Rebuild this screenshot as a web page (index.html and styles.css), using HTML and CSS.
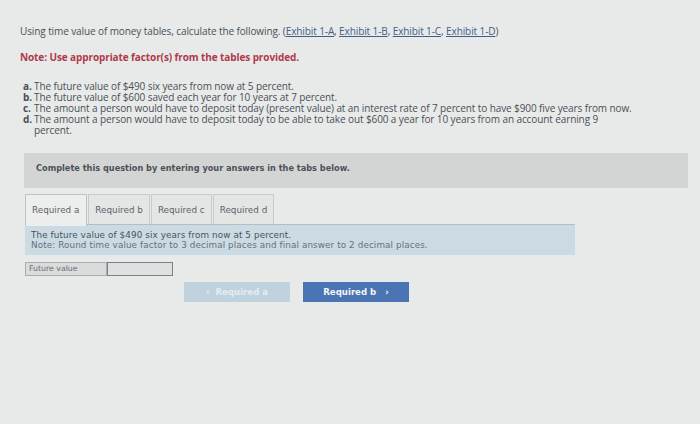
FILE: index.html
```html
<!DOCTYPE html>
<html>
<head>
<meta charset="utf-8">
<link rel="stylesheet" href="styles.css">
</head>
<body>
<div class="page">
  <p class="intro">Using time value of money tables, calculate the following. (<a href="#">Exhibit 1-A</a>, <a href="#">Exhibit 1-B</a>, <a href="#">Exhibit 1-C</a>, <a href="#">Exhibit 1-D</a>)</p>
  <p class="note">Note: Use appropriate factor(s) from the tables provided.</p>
  <ol class="items">
    <li><span class="m">a.</span><span>The future value of $490 six years from now at 5 percent.</span></li>
    <li><span class="m">b.</span><span>The future value of $600 saved each year for 10 years at 7 percent.</span></li>
    <li><span class="m">c.</span><span>The amount a person would have to deposit today (present value) at an interest rate of 7 percent to have $900 five years from now.</span></li>
    <li><span class="m">d.</span><span>The amount a person would have to deposit today to be able to take out $600 a year for 10 years from an account earning 9 percent.</span></li>
  </ol>
  <div class="complete">Complete this question by entering your answers in the tabs below.</div>
  <div class="tabs">
    <div class="tab active">Required a</div>
    <div class="tab">Required b</div>
    <div class="tab">Required c</div>
    <div class="tab">Required d</div>
  </div>
  <div class="panel">
    <div>The future value of $490 six years from now at 5 percent.</div>
    <div class="rnote">Note: Round time value factor to 3 decimal places and final answer to 2 decimal places.</div>
  </div>
  <div class="answer">
    <div class="label">Future value</div>
    <div class="input"></div>
  </div>
  <div class="nav">
    <div class="btn prev">&lsaquo;&nbsp;&nbsp;Required a</div>
    <div class="btn next">Required b&nbsp;&nbsp;&nbsp;&rsaquo;</div>
  </div>
</div>
</body>
</html>
```
FILE: styles.css
```css
html, body {
  margin: 0;
  padding: 0;
  background: #e7eae9;
}
.page {
  width: 700px;
  height: 424px;
  overflow: hidden;
  padding: 25px 12px 0 20px;
  box-sizing: border-box;
  font-family: "Open Sans", "Liberation Sans", sans-serif;
  color: #4a4f57;
  font-size: 10px;
}
p { margin: 0; }
.intro {
  letter-spacing: -0.1px;
  line-height: 12px;
}
.intro a {
  color: #3f5e8c;
  text-decoration: underline;
}
.note {
  margin-top: 14px;
  color: #b03a4c;
  font-weight: 700;
  line-height: 12px;
  letter-spacing: -0.1px;
}
.items {
  list-style: none;
  margin: 17.5px 0 0 0;
  padding: 0 0 0 3px;
  line-height: 11px;
  letter-spacing: -0.1px;
  width: 614px;
}
.items li {
  display: flex;
}
.items .m {
  font-weight: 700;
  width: 11px;
  flex: none;
}
.complete {
  margin: 17.5px 0 0 4px;
  width: 664px;
  height: 35px;
  box-sizing: border-box;
  background: #d2d5d4;
  font-family: "DejaVu Sans", Verdana, sans-serif;
  font-weight: 700;
  font-size: 8.2px;
  line-height: 10px;
  color: #4d5159;
  padding: 10px 0 0 12px;
}
.tabs {
  display: flex;
  margin: 6px 0 0 5px;
  font-family: "DejaVu Sans", Verdana, sans-serif;
  font-size: 8.8px;
  color: #5e6268;
}
.tab {
  height: 30px;
  line-height: 30px;
  padding: 0 6px;
  border: 1px solid #c7cbca;
  border-bottom: none;
  margin-right: 1px;
  box-sizing: border-box;
  background: #e3e6e5;
}
.tab.active {
  height: 32px;
  padding: 0 7px 0 6px;
  background: #eceeed;
  border-color: #bfc3c2;
  margin-bottom: -2px;
  position: relative;
  z-index: 1;
}
.panel {
  margin-left: 5px;
  width: 550px;
  height: 31px;
  box-sizing: border-box;
  background: #cadbe4;
  border-top: 1px solid #b8bcbe;
  font-family: "DejaVu Sans", Verdana, sans-serif;
  font-size: 8.8px;
  color: #4d5258;
  padding: 6px 0 0 6px;
  line-height: 9.5px;
  letter-spacing: 0.1px;
}
.rnote {
  color: #6b6f78;
}
.answer {
  display: flex;
  margin: 7px 0 0 5px;
  height: 14px;
  font-family: "DejaVu Sans", Verdana, sans-serif;
  font-size: 7.8px;
  color: #666a70;
}
.label {
  width: 82px;
  box-sizing: border-box;
  border: 1px solid #a9adae;
  background: #d9dcdc;
  padding: 1px 0 0 3px;
}
.input {
  width: 66px;
  box-sizing: border-box;
  border: 1.5px solid #7c8184;
  background: #dde1e2;
}
.nav {
  display: flex;
  margin: 6px 0 0 164px;
  gap: 13px;
  font-family: "DejaVu Sans", Verdana, sans-serif;
  font-weight: 700;
  font-size: 8.6px;
}
.btn {
  width: 106px;
  height: 20px;
  line-height: 20px;
  text-align: center;
  box-sizing: border-box;
}
.prev {
  background: #c0d2de;
  color: #e4ecf1;
}
.next {
  background: #4a74b3;
  color: #f2f5fa;
}
```
